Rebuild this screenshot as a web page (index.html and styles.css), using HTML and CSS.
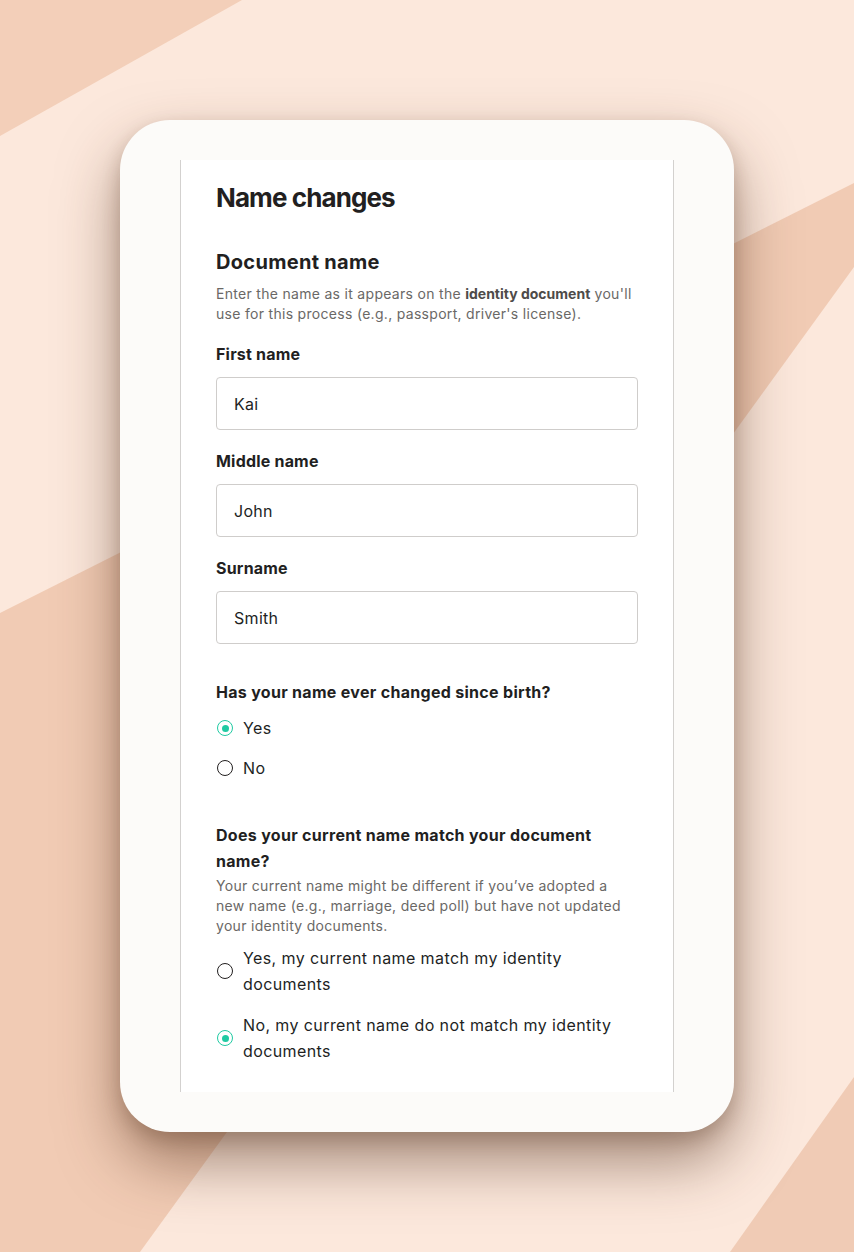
FILE: index.html
```html
<!DOCTYPE html>
<html lang="en">
<head>
<meta charset="utf-8">
<title>Name changes</title>
<link rel="stylesheet" href="styles.css">
</head>
<body>
<div class="stage">
  <svg class="bg" width="854" height="1252" viewBox="0 0 854 1252" aria-hidden="true">
    <rect width="854" height="1252" fill="#fce8dc"/>
    <polygon points="0,0 242,0 0,136" fill="#f3cfb9"/>
    <polygon points="0,613 854,183 854,267 140,1252 0,1252" fill="#f1cbb4"/>
    <polygon points="854,1077 854,1252 730,1252" fill="#f0cbb5"/>
  </svg>
  <div class="device">
    <div class="panel">
      <h1 class="title">Name changes</h1>
      <h2 class="section">Document name</h2>
      <p class="hint">Enter the name as it appears on the <strong>identity document</strong> you'll use for this process (e.g., passport, driver's license).</p>

      <div class="field">
        <label class="label">First name</label>
        <div class="input">Kai</div>
      </div>
      <div class="field">
        <label class="label">Middle name</label>
        <div class="input">John</div>
      </div>
      <div class="field">
        <label class="label">Surname</label>
        <div class="input">Smith</div>
      </div>

      <div class="group group-1">
        <div class="question">Has your name ever changed since birth?</div>
        <div class="options">
          <div class="option"><span class="radio checked"></span><span class="opt-text">Yes</span></div>
          <div class="option"><span class="radio"></span><span class="opt-text">No</span></div>
        </div>
      </div>

      <div class="group group-2">
        <div class="question q-wide">Does your current name match your document name?</div>
        <p class="hint hint-q">Your current name might be different if you’ve adopted a new name (e.g., marriage, deed poll) but have not updated your identity documents.</p>
        <div class="options options-long">
          <div class="option"><span class="radio"></span><span class="opt-text">Yes, my current name match my identity documents</span></div>
          <div class="option"><span class="radio checked"></span><span class="opt-text">No, my current name do not match my identity documents</span></div>
        </div>
      </div>
    </div>
  </div>
</div>
</body>
</html>
```

FILE: styles.css
```css
* { box-sizing: border-box; }
html, body { margin: 0; padding: 0; }
body {
  font-family: Inter, Roboto, "Liberation Sans", Arial, sans-serif;
  color: #221f1f;
  width: 854px;
  height: 1252px;
  overflow: hidden;
}
.stage {
  position: relative;
  width: 854px;
  height: 1252px;
  padding-top: 120px;
}
.bg {
  position: absolute;
  left: 0;
  top: 0;
  z-index: 0;
  display: block;
}
.device {
  position: relative;
  z-index: 1;
  width: 614px;
  height: 1012px;
  margin: 0 auto;
  background: #fcfbf9;
  border-radius: 50px;
  padding: 40px 60px;
  box-shadow: 0 30px 60px rgba(80, 45, 25, 0.5), 0 8px 18px rgba(80, 45, 25, 0.22);
}
.panel {
  height: 932px;
  background: #ffffff;
  border-left: 1px solid #d3d1cf;
  border-right: 1px solid #d3d1cf;
  padding: 20px 35px 0;
  overflow: hidden;
}
.title {
  margin: 0;
  font-size: 26px;
  line-height: 36px;
  font-weight: 700;
  letter-spacing: -0.9px;
}
.section {
  margin: 32px 0 0;
  font-size: 20px;
  line-height: 28px;
  font-weight: 700;
  letter-spacing: 0.3px;
}
.hint {
  margin: 8px 0 0;
  font-size: 14px;
  line-height: 20px;
  color: #6a6866;
  letter-spacing: 0.3px;
}
.hint strong { color: #4e4b49; font-weight: 700; letter-spacing: 0; }
.field { margin-top: 18px; }
.field + .field { margin-top: 19px; }
.label {
  display: block;
  font-size: 16px;
  line-height: 24px;
  font-weight: 700;
  letter-spacing: 0.2px;
}
.input {
  margin-top: 11px;
  height: 53px;
  border: 1px solid #cfcdcb;
  border-radius: 4px;
  padding: 0 17px;
  display: flex;
  align-items: center;
  font-size: 16px;
  letter-spacing: 0.3px;
  color: #221f1f;
}
.group-1 { margin-top: 36px; }
.question {
  font-size: 16px;
  line-height: 24px;
  font-weight: 700;
  letter-spacing: 0.3px;
}
.q-wide { line-height: 26px; }
.options {
  display: flex;
  flex-direction: column;
  gap: 16px;
  margin-top: 12px;
}
.option {
  display: flex;
  align-items: center;
  gap: 10px;
  font-size: 16px;
  line-height: 24px;
  letter-spacing: 0.4px;
}
.radio {
  flex: none;
  width: 16px;
  height: 16px;
  margin-left: 1px;
  border: 1.5px solid #221f1f;
  border-radius: 50%;
  display: flex;
  align-items: center;
  justify-content: center;
}
.radio.checked { border-color: #1fcaa2; }
.radio.checked::after {
  content: "";
  width: 7px;
  height: 7px;
  border-radius: 50%;
  background: #1fcaa2;
}
.group-2 { margin-top: 42px; }
.hint-q { margin-top: 2px; }
.options-long { margin-top: 9px; gap: 15px; }
.options-long .option { line-height: 26px; }
```
